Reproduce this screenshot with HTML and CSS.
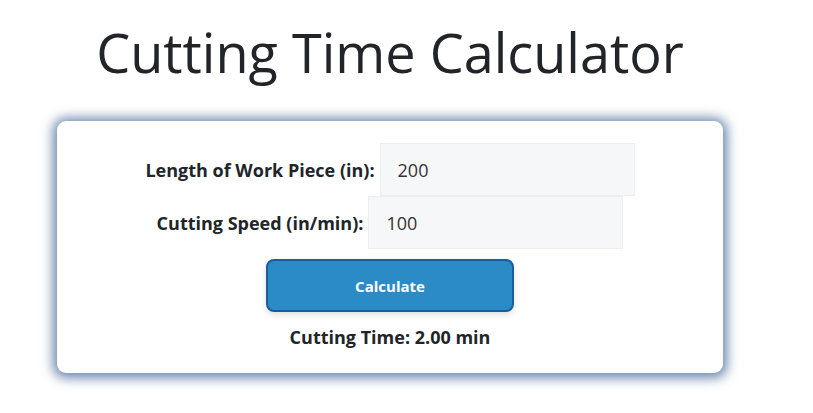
FILE: index.html
```html
<!DOCTYPE html>
<html lang="en">
<head>
<meta charset="utf-8">
<title>Cutting Time Calculator</title>
<link rel="stylesheet" href="styles.css">
</head>
<body>
<main class="page">
  <h1 class="title">Cutting Time Calculator</h1>
  <section class="card">
    <div class="row">
      <label class="label" for="len">Length of Work Piece (in):</label>
      <input class="field" id="len" type="text" value="200">
    </div>
    <div class="row">
      <label class="label" for="spd">Cutting Speed (in/min):</label>
      <input class="field" id="spd" type="text" value="100">
    </div>
    <button class="btn" type="button">Calculate</button>
    <p class="result">Cutting Time: 2.00 min</p>
  </section>
</main>
</body>
</html>
```

FILE: styles.css
```css
html, body {
  margin: 0;
  padding: 0;
  background: #ffffff;
}
body {
  font-family: "Open Sans", "Noto Sans", sans-serif;
  color: #212529;
}
.page {
  width: 666px;
  margin-left: 57px;
  padding-bottom: 40px;
  display: flex;
  flex-direction: column;
  align-items: center;
}
.title {
  margin: 9px 0 0;
  font-weight: 400;
  font-size: 54px;
  line-height: 86px;
  color: #212529;
  height: 112px;
}
.card {
  width: 666px;
  height: 252px;
  box-sizing: border-box;
  background: #fff;
  border-radius: 9px;
  box-shadow: 0 1px 12px 4px rgba(70, 105, 150, 0.8);
  padding-top: 22px;
  display: flex;
  flex-direction: column;
  align-items: center;
}
.row {
  display: flex;
  align-items: center;
  gap: 5px;
}
.label {
  font-weight: 700;
  font-size: 18px;
  color: #212529;
}
.field {
  width: 255px;
  height: 53px;
  box-sizing: border-box;
  border: 1px solid #eceef1;
  background: #f6f7f9;
  padding: 0 17px;
  font-family: inherit;
  font-size: 18px;
  color: #333;
  outline: none;
}
.btn {
  margin-top: 10px;
  width: 248px;
  height: 53px;
  background: #2a8bc7;
  border: 2px solid #1a5c9c;
  border-radius: 8px;
  color: #fff;
  font-family: inherit;
  font-weight: 700;
  font-size: 15px;
  box-shadow: 0 3px 6px rgba(0, 0, 0, 0.12);
}
.result {
  margin: 13px 0 0;
  font-weight: 700;
  font-size: 18px;
  color: #212529;
}
```
